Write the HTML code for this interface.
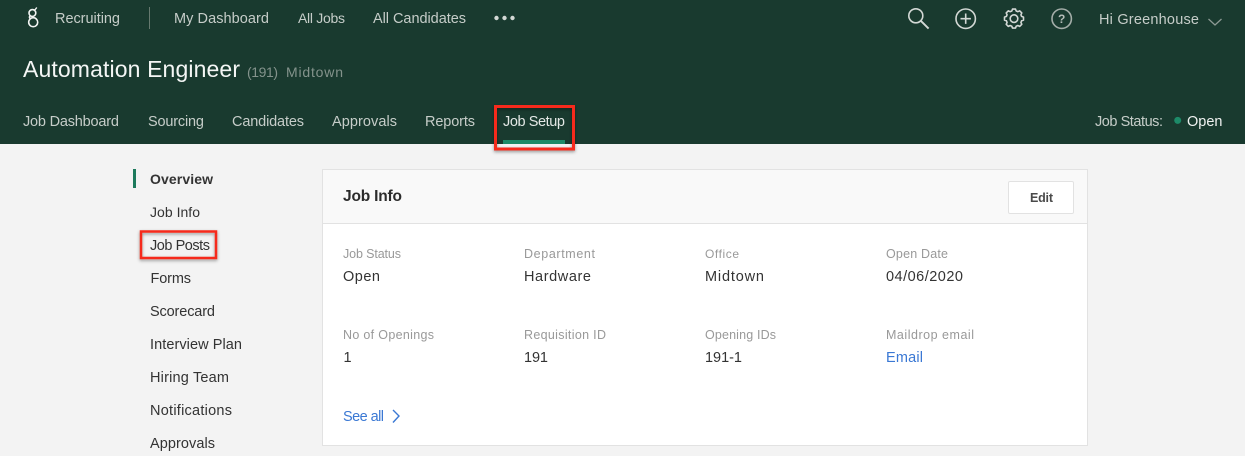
<!DOCTYPE html>
<html lang="en"><head><meta charset="utf-8"><title>Job Setup</title>
<style>
html,body{margin:0;padding:0;width:1245px;height:456px;overflow:hidden;background:#f3f3f3}
svg{display:block}
text{font-family:"Liberation Sans",Arial,sans-serif;font-size:14.5px;fill:#333}
.n{fill:#c6cdc9}
.t{fill:#c6cdc9}
.s{fill:#333}
.l{fill:#999;font-size:12.5px}
.v{fill:#333}
.a{fill:#3a78d4}
</style></head><body>
<svg width="1245" height="456" viewBox="0 0 1245 456" xmlns="http://www.w3.org/2000/svg">
<defs><filter id="sh" x="-20%" y="-20%" width="140%" height="150%"><feDropShadow dx="0" dy="1.5" stdDeviation="1.5" flood-color="#000" flood-opacity=".4"/></filter></defs>
<rect width="1245" height="144" fill="#193a2f"/>

<!-- logo -->
<g fill="none" stroke="#f2f4f3" stroke-width="1.6">
<circle cx="32.4" cy="13" r="3.4"/>
<circle cx="33.2" cy="22.2" r="4.5"/>
<path d="M30.2 15.8c-1.2 1.1-.9 2.300 .3 2.900"/>
<path d="M34.6 10.300l2.200-2.800" stroke-width="1.4"/>
</g>
<text x="55" y="23" class="n" textLength="65">Recruiting</text>
<rect x="149" y="7" width="1" height="22" fill="#66796f"/>
<text x="174" y="23" class="n" textLength="95">My Dashboard</text>
<text x="298" y="23" class="n" style="font-size:14px" textLength="47">All Jobs</text>
<text x="373" y="23" class="n" textLength="93">All Candidates</text>
<g fill="#d3d8d5"><circle cx="496.5" cy="18" r="2.2"/><circle cx="504.5" cy="18" r="2.2"/><circle cx="512.5" cy="18" r="2.2"/></g>

<!-- right icons -->
<g fill="none" stroke="#d3d8d5" stroke-width="1.6">
<circle cx="915.8" cy="15.8" r="7"/>
<path d="M920.8 20.8l7.8 7.8" stroke-width="1.9"/>
<circle cx="965.7" cy="18.7" r="9.7"/>
<path d="M965.7 13.5v10.4M960.5 18.7h10.4"/>
<circle cx="1014" cy="18.6" r="3.8"/>
<polygon transform="translate(1014 18.6)" stroke-linejoin="round" points="-2.2,-7.6 -1.5,-9.5 1.5,-9.5 2.2,-7.6 3.82,-6.93 5.66,-7.78 7.78,-5.66 6.93,-3.82 7.6,-2.2 9.5,-1.5 9.5,1.5 7.6,2.2 6.93,3.82 7.78,5.66 5.66,7.78 3.82,6.93 2.2,7.6 1.5,9.5 -1.5,9.5 -2.2,7.6 -3.82,6.93 -5.66,7.78 -7.78,5.66 -6.93,3.82 -7.6,2.2 -9.5,1.5 -9.5,-1.5 -7.6,-2.2 -6.93,-3.82 -7.78,-5.66 -5.66,-7.78 -3.82,-6.93"/>
<circle cx="1061.7" cy="18.7" r="9.7" stroke="#a3ada8"/>
<path d="M1208.5 19l6.5 6 6.5-6" stroke="#8d9a94" stroke-width="1.3"/>
</g>
<text x="1061.7" y="23" text-anchor="middle" style="font-size:12px;font-weight:bold;fill:#b5bdb9">?</text>
<text x="1099" y="24" class="n" textLength="100">Hi Greenhouse</text>

<!-- title -->
<text x="23" y="77" style="font-size:23px;fill:#f4f6f5" textLength="217">Automation Engineer</text>
<text x="247" y="77" style="font-size:14px;fill:#84938c" textLength="31">(191)</text>
<text x="286" y="77" style="font-size:14px;fill:#84938c" textLength="57">Midtown</text>

<!-- tabs -->
<text x="23" y="126" class="t" textLength="96">Job Dashboard</text>
<text x="148" y="126" class="t" textLength="56">Sourcing</text>
<text x="232" y="126" class="t" textLength="72">Candidates</text>
<text x="332" y="126" class="t" textLength="65">Approvals</text>
<text x="425" y="126" class="t" textLength="50">Reports</text>
<text x="503" y="126" style="fill:#e4e8e6" textLength="62">Job Setup</text>
<rect x="503" y="140" width="62" height="4" fill="#1d8a68"/>
<text x="1095" y="126" class="t" textLength="68">Job Status:</text>
<circle cx="1177.7" cy="120.4" r="3.5" fill="#1d8a68"/>
<text x="1187" y="126" style="fill:#f0f2f1" textLength="35.500">Open</text>

<!-- red box tab -->
<rect x="495.500" y="106.500" width="78" height="42.500" fill="none" stroke="#f62a1b" stroke-width="3" filter="url(#sh)"/>

<!-- sidebar -->
<rect x="133" y="169" width="3" height="19" fill="#1d7a5c"/>
<text x="150" y="184" class="s" style="font-weight:bold;font-size:14px" textLength="63">Overview</text>
<text x="150" y="217" class="s" style="font-size:14px" textLength="50">Job Info</text>
<text x="150" y="250" class="s" textLength="60">Job Posts</text>
<text x="150.500" y="283" class="s" textLength="40.500">Forms</text>
<text x="150" y="316" class="s" textLength="65">Scorecard</text>
<text x="150" y="349" class="s" textLength="92">Interview Plan</text>
<text x="150" y="382" class="s" textLength="79">Hiring Team</text>
<text x="150" y="415" class="s" textLength="82">Notifications</text>
<text x="150" y="448" class="s" textLength="65">Approvals</text>
<rect x="141" y="231.500" width="75" height="26.500" fill="none" stroke="#f62a1b" stroke-width="2.500" filter="url(#sh)"/>

<!-- card -->
<rect x="322.500" y="169.500" width="765" height="276" fill="#fff" stroke="#e2e2e2"/>
<rect x="323" y="170" width="764" height="53" fill="#f9f9f9"/>
<rect x="323" y="223" width="764" height="1" fill="#e2e2e2"/>
<text x="343" y="201" style="font-size:15.5px;font-weight:bold;fill:#2b2b2b" textLength="59">Job Info</text>
<rect x="1008.500" y="181.500" width="65" height="32" rx="1.500" fill="#fff" stroke="#e2e2e2"/>
<text x="1030" y="202" style="font-size:12.5px;font-weight:bold;fill:#4a4a4a" textLength="23">Edit</text>

<text x="343" y="258" class="l" textLength="58">Job Status</text>
<text x="343" y="281" class="v" textLength="37">Open</text>
<text x="524" y="258" class="l" textLength="71">Department</text>
<text x="524" y="281" class="v" textLength="67">Hardware</text>
<text x="705" y="258" class="l" style="font-size:12px" textLength="34">Office</text>
<text x="705" y="281" class="v" textLength="59">Midtown</text>
<text x="886" y="258" class="l" textLength="62">Open Date</text>
<text x="886" y="281" class="v" textLength="77">04/06/2020</text>

<text x="343" y="339" class="l" textLength="91">No of Openings</text>
<text x="343.500" y="362" class="v">1</text>
<text x="524" y="339" class="l" textLength="82">Requisition ID</text>
<text x="524" y="362" class="v" textLength="24">191</text>
<text x="705" y="339" class="l" textLength="71">Opening IDs</text>
<text x="705" y="362" class="v" textLength="37">191-1</text>
<text x="886" y="339" class="l" textLength="88">Maildrop email</text>
<text x="886" y="362" class="v a" textLength="37">Email</text>

<text x="343" y="421" class="a" textLength="41">See all</text>
<path d="M393 410l6 6-6 6.500" fill="none" stroke="#3a78d4" stroke-width="1.400"/>
</svg>
</body></html>
